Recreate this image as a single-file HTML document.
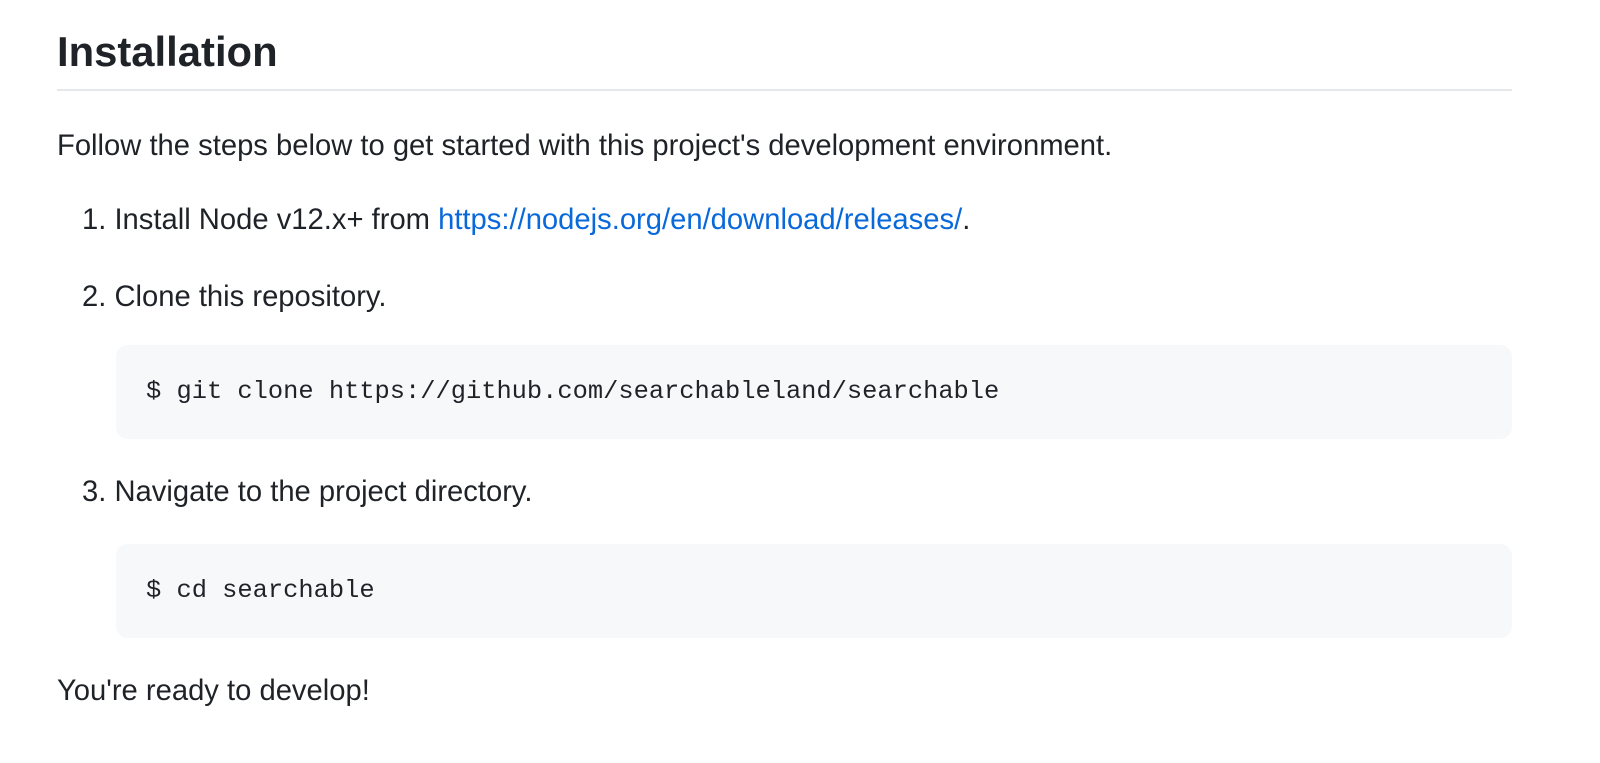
<!DOCTYPE html>
<html><head><meta charset="utf-8"><style>
html,body{margin:0;padding:0;background:#fff;width:1600px;height:763px;overflow:hidden}
body{font-family:"Liberation Sans",Arial,sans-serif;color:#1f2328;position:relative}
.a{position:absolute;white-space:nowrap}
h2{position:absolute;left:57px;top:24px;margin:0;font-size:41.8px;font-weight:bold;line-height:56px}
.hr{position:absolute;left:57px;top:89px;width:1455px;height:2px;background:#e5e8eb}
.p{font-size:29.2px;line-height:40px}
a{color:#0969da;text-decoration:none}
.code{position:absolute;left:116px;width:1396px;height:94px;background:#f6f8fa;border-radius:12px}
.code span{position:absolute;left:30px;top:29px;font-family:"Liberation Mono","DejaVu Sans Mono",monospace;font-size:25.4px;line-height:36px;color:#1f2328}
</style></head><body>
<h2>Installation</h2>
<div class="hr"></div>
<div class="a p" style="left:57px;top:126px">Follow the steps below to get started with this project's development environment.</div>
<div class="a p" style="left:82px;top:200px">1. Install Node v12.x+ from <a>https://nodejs.org/en/download/releases/</a>.</div>
<div class="a p" style="left:82px;top:277px">2. Clone this repository.</div>
<div class="code" style="top:345px"><span>$ git clone https://github.com/searchableland/searchable</span></div>
<div class="a p" style="left:82px;top:472px">3. Navigate to the project directory.</div>
<div class="code" style="top:544px"><span>$ cd searchable</span></div>
<div class="a p" style="left:57px;top:671px">You're ready to develop!</div>
</body></html>
